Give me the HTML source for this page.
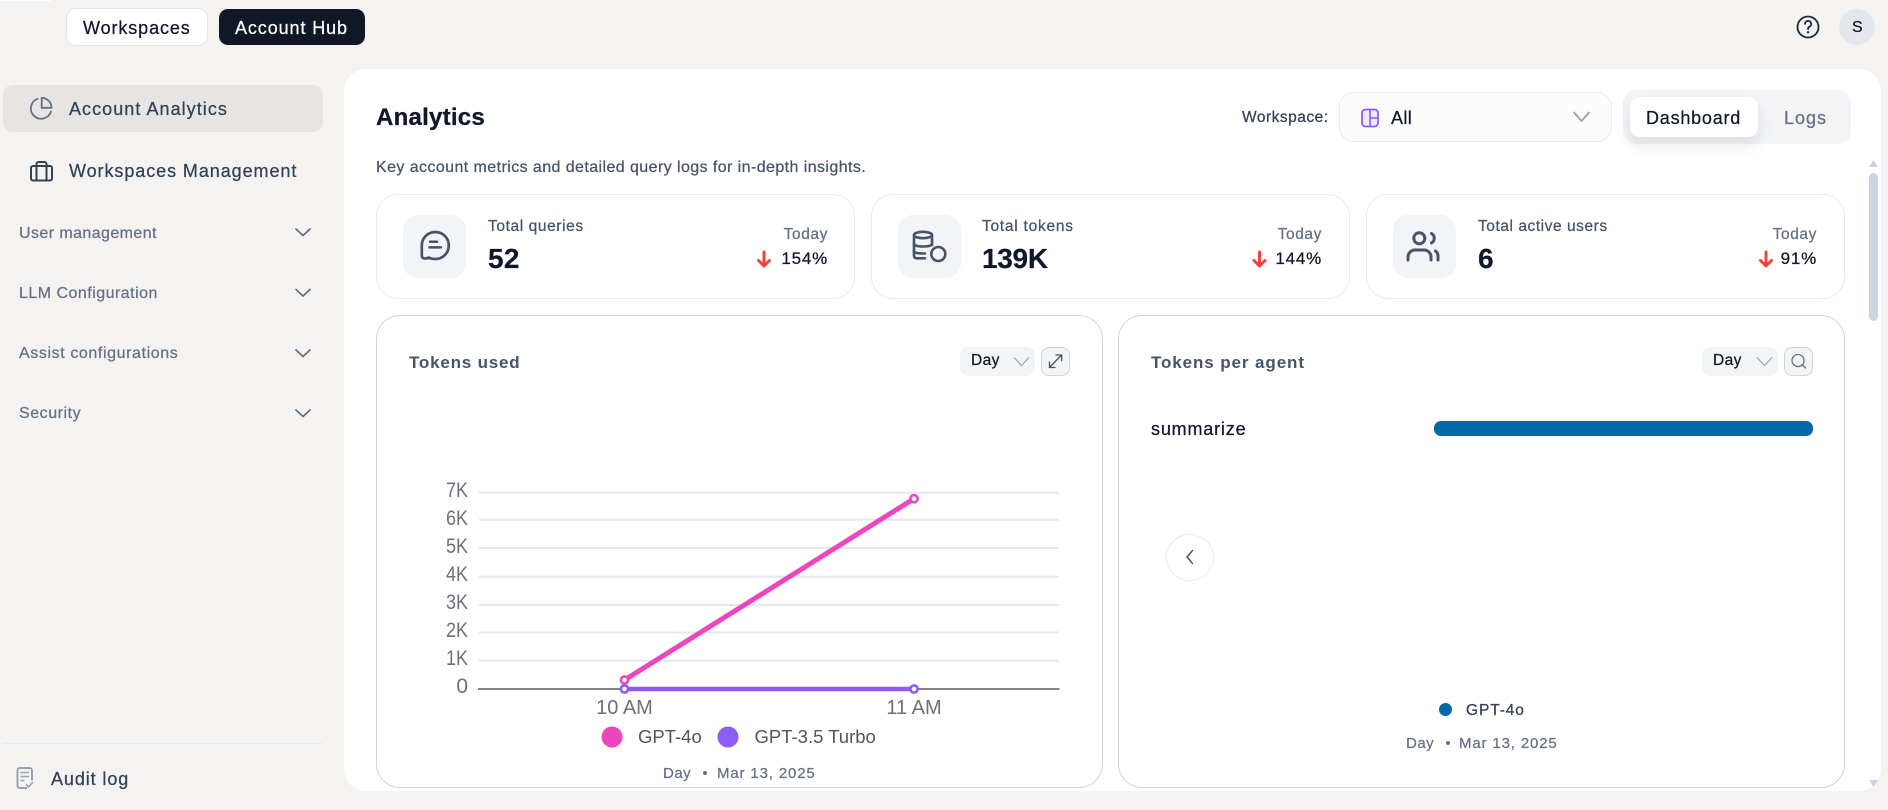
<!DOCTYPE html>
<html lang="en">
<head>
<meta charset="utf-8">
<title>Analytics</title>
<style>
html,body{margin:0;padding:0;width:1888px;height:810px;overflow:hidden;background:#f4f3f1;font-family:"Liberation Sans",sans-serif;}
.b{position:absolute;box-sizing:border-box;}
.t{position:absolute;white-space:nowrap;line-height:20px;height:20px;-webkit-text-stroke:.25px currentColor;}
.r{text-align:right;}
.stat{position:absolute;box-sizing:border-box;top:194px;height:105px;background:#fff;border:1px solid #eaecf0;border-radius:22px;}
.ibox{position:absolute;top:215px;height:63px;width:63px;background:#f2f4f7;border-radius:15px;}
.lbl{font-size:15.5px;color:#475467;letter-spacing:.75px;top:217px;}
.num{font-size:28px;font-weight:bold;color:#101828;top:249px;-webkit-text-stroke:.2px currentColor;}
.today{font-size:15.5px;color:#667085;letter-spacing:.6px;top:225px;}
.pct{font-size:17px;color:#101828;letter-spacing:.8px;top:249px;}
.sec{font-size:16px;color:#667085;left:19px;}
.chart{position:absolute;box-sizing:border-box;top:315px;height:473px;background:#fff;border:1px solid #d0d5dd;border-radius:24px;}
.ttl{font-size:17px;font-weight:bold;color:#475467;top:353px;-webkit-text-stroke:0;}
.dd{position:absolute;top:347px;height:29px;background:#f2f4f7;border-radius:8px;}
.ib{position:absolute;box-sizing:border-box;top:347px;height:29px;width:29px;background:#f2f4f7;border:1px solid #d0d5dd;border-radius:8px;}
.day{font-size:15.5px;color:#101828;letter-spacing:.4px;top:351px;}
.foot{font-size:15px;color:#667085;}
svg{position:absolute;left:0;top:0;overflow:visible;}
</style>
</head>
<body>
<div class="b" style="left:0;top:0;width:51px;height:1px;background:#fff"></div>

<!-- top nav -->
<div class="b" style="left:66px;top:8px;width:142px;height:38px;background:#fff;border:1px solid #e7e5e4;border-radius:10px"></div>
<div class="t" style="left:83px;top:18px;font-size:18px;letter-spacing:.9px;color:#101828">Workspaces</div>
<div class="b" style="left:219px;top:9px;width:146px;height:36px;background:#101828;border-radius:9px"></div>
<div class="t" style="left:235px;top:18px;font-size:18px;letter-spacing:.9px;color:#fff">Account Hub</div>
<div class="b" style="left:1839px;top:9px;width:36px;height:36px;background:#e4e7ec;border-radius:50%"></div>
<div class="t" style="left:1852px;top:18px;font-size:16px;color:#101828">S</div>

<!-- sidebar -->
<div class="b" style="left:3px;top:85px;width:320px;height:47px;background:#e7e5e4;border-radius:10px"></div>
<div class="t" style="left:69px;top:99px;font-size:18px;letter-spacing:1.05px;color:#344054">Account Analytics</div>
<div class="t" style="left:69px;top:161px;font-size:18px;letter-spacing:.93px;color:#344054">Workspaces Management</div>
<div class="t sec" style="top:224px;letter-spacing:.42px">User management</div>
<div class="t sec" style="top:284px;letter-spacing:.48px">LLM Configuration</div>
<div class="t sec" style="top:344px;letter-spacing:.6px">Assist configurations</div>
<div class="t sec" style="top:404px;letter-spacing:.55px">Security</div>
<div class="b" style="left:3px;top:743px;width:320px;height:1px;background:#eaeaea"></div>
<div class="t" style="left:51px;top:769px;font-size:18px;letter-spacing:.9px;color:#344054">Audit log</div>

<!-- main -->
<div class="b" style="left:344px;top:69px;width:1537px;height:722px;background:#fff;border-radius:22px"></div>
<div class="t" style="left:376px;top:108px;font-size:24px;font-weight:bold;letter-spacing:.25px;color:#101828;-webkit-text-stroke:.3px currentColor">Analytics</div>
<div class="t" style="left:376px;top:158px;font-size:16px;letter-spacing:.42px;color:#475467">Key account metrics and detailed query logs for in-depth insights.</div>

<div class="t" style="left:1242px;top:108px;font-size:15.5px;letter-spacing:.5px;color:#344054">Workspace:</div>
<div class="b" style="left:1339px;top:92px;width:273px;height:50px;background:#fcfcfd;border:1px solid #eaecf0;border-radius:15px"></div>
<div class="t" style="left:1391px;top:108px;font-size:18px;letter-spacing:.4px;color:#101828">All</div>
<div class="b" style="left:1623px;top:90px;width:228px;height:54px;background:#f2f4f7;border-radius:13px"></div>
<div class="b" style="left:1770px;top:97px;width:72px;height:40px;background:#f4f4f5;border-radius:10px"></div>
<div class="b" style="left:1630px;top:97px;width:128px;height:40px;background:#fff;border-radius:10px;box-shadow:0 8px 16px rgba(16,24,40,.10)"></div>
<div class="t" style="left:1646px;top:108px;font-size:18px;letter-spacing:.78px;color:#101828">Dashboard</div>
<div class="t" style="left:1784px;top:108px;font-size:18px;letter-spacing:1px;color:#667085">Logs</div>

<!-- stat cards -->
<div class="stat" style="left:376px;width:479px"></div>
<div class="ibox" style="left:403px"></div>
<div class="t lbl" style="left:488px;letter-spacing:.6px">Total queries</div>
<div class="t num" style="left:488px;letter-spacing:.3px">52</div>
<div class="t today r" style="right:1060px">Today</div>
<div class="t pct r" style="right:1060px">154%</div>

<div class="stat" style="left:871px;width:479px"></div>
<div class="ibox" style="left:898px"></div>
<div class="t lbl" style="left:982px">Total tokens</div>
<div class="t num" style="left:982px;letter-spacing:-.3px">139K</div>
<div class="t today r" style="right:566px">Today</div>
<div class="t pct r" style="right:566px">144%</div>

<div class="stat" style="left:1366px;width:479px"></div>
<div class="ibox" style="left:1393px"></div>
<div class="t lbl" style="left:1478px;letter-spacing:.55px">Total active users</div>
<div class="t num" style="left:1478px">6</div>
<div class="t today r" style="right:71px">Today</div>
<div class="t pct r" style="right:71px">91%</div>

<!-- chart cards -->
<div class="chart" style="left:376px;width:727px"></div>
<div class="chart" style="left:1118px;width:727px"></div>

<div class="t ttl" style="left:409px;letter-spacing:.8px">Tokens used</div>
<div class="dd" style="left:960px;width:75px"></div>
<div class="ib" style="left:1041px"></div>
<div class="t day" style="left:971px">Day</div>

<div class="t ttl" style="left:1151px;letter-spacing:.9px">Tokens per agent</div>
<div class="dd" style="left:1702px;width:76px"></div>
<div class="ib" style="left:1784px"></div>
<div class="t day" style="left:1713px">Day</div>

<div class="t" style="left:1151px;top:419px;font-size:18px;letter-spacing:.82px;color:#101828">summarize</div>
<div class="b" style="left:1434px;top:421px;width:379px;height:15px;background:#0069a5;border-radius:7px"></div>
<div class="b" style="left:1166px;top:534px;width:48px;height:47px;background:#fff;border:1px solid #eaecf0;border-radius:50%"></div>
<div class="b" style="left:1439px;top:703px;width:13px;height:13px;background:#0069a5;border-radius:50%"></div>
<div class="t" style="left:1466px;top:701px;font-size:15.5px;letter-spacing:.9px;color:#344054">GPT-4o</div>

<div class="t foot" style="left:663px;top:764px;letter-spacing:.5px">Day</div>
<div class="b" style="left:702.500px;top:771px;width:4px;height:4px;background:#667085;border-radius:50%"></div>
<div class="t foot" style="left:717px;top:764px;letter-spacing:.85px">Mar 13, 2025</div>
<div class="t foot" style="left:1406px;top:734px;letter-spacing:.5px">Day</div>
<div class="b" style="left:1445.500px;top:741px;width:4px;height:4px;background:#667085;border-radius:50%"></div>
<div class="t foot" style="left:1459px;top:734px;letter-spacing:.85px">Mar 13, 2025</div>

<!-- scrollbar -->
<div class="b" style="left:1869px;top:173px;width:9px;height:148px;background:#cbd5e1;border-radius:5px"></div>

<svg width="1888" height="810" viewBox="0 0 1888 810" fill="none">
  <!-- scrollbar arrows -->
  <path d="M1873.500 160l4.500 7h-9z" fill="#cbd5e1"/>
  <path d="M1873.500 787l-4.500-7h9z" fill="#cbd5e1"/>

  <!-- sidebar icons -->
  <path d="M37.500 98.800A10.300 10.300 0 1 0 51 111.500" stroke="#667085" stroke-width="1.800" stroke-linecap="round"/>
  <path d="M41.700 97.800A10 10 0 0 1 51.500 107.800H41.700Z" stroke="#667085" stroke-width="1.800" stroke-linejoin="round"/>
  <rect x="31" y="166" width="21" height="14.500" rx="2" stroke="#344054" stroke-width="2"/>
  <path d="M36.500 180.500V164a2 2 0 0 1 2-2h6a2 2 0 0 1 2 2v16.500" stroke="#344054" stroke-width="2"/>
  <g stroke="#667085" stroke-width="1.800" stroke-linecap="round" stroke-linejoin="round">
    <path d="M296 229l7 6.500 7-6.500"/><path d="M296 289.500l7 6.500 7-6.500"/><path d="M296 350l7 6.500 7-6.500"/><path d="M296 410l7 6.500 7-6.500"/>
  </g>
  <path d="M27 788h-7a2.500 2.500 0 0 1-2.500-2.500v-15a2.500 2.500 0 0 1 2.500-2.500h9.500a2.500 2.500 0 0 1 2.500 2.500v10" stroke="#9ca3af" stroke-width="2"/>
  <path d="M20.500 772.500h8.500M20.500 776.500h8.500M20.500 780.500h4" stroke="#9ca3af" stroke-width="1.600"/>
  <path d="M26 784.500l2.500 2.500 4.500-5" stroke="#9ca3af" stroke-width="1.600"/>

  <!-- help -->
  <circle cx="1808" cy="27" r="10.500" stroke="#1d2939" stroke-width="1.800"/>
  <path d="M1805 24a3.100 3.100 0 1 1 4.600 2.700c-1 .6-1.600 1.200-1.600 2.400" stroke="#1d2939" stroke-width="1.800" stroke-linecap="round"/>
  <circle cx="1808" cy="32.300" r="1.200" fill="#1d2939"/>

  <!-- workspace select icons -->
  <rect x="1362" y="109.500" width="16" height="17" rx="3.500" fill="#ede9fe" stroke="#8b5cf6" stroke-width="1.800"/>
  <path d="M1370 109.500v17M1370 118h8" stroke="#8b5cf6" stroke-width="1.600"/>
  <path d="M1574 112.500l7.500 8.500 7.500-8.500" stroke="#98a2b3" stroke-width="1.800" stroke-linecap="round" stroke-linejoin="round"/>

  <!-- chat icon -->
  <path d="M435.300 259A13.500 13.500 0 1 0 421.800 245.500V255Q421.700 259 425.700 258.500L428.700 257.600Q431.700 259 435.300 259Z" stroke="#475467" stroke-width="2.700" stroke-linejoin="round"/>
  <path d="M430 241.700h7M429.500 247.400h11.500" stroke="#475467" stroke-width="2.500" stroke-linecap="round"/>

  <!-- db icon -->
  <g stroke="#475467" stroke-width="2.600" stroke-linecap="round">
    <ellipse cx="923" cy="235" rx="9" ry="3.200"/>
    <path d="M914 235v20.500q0 2.800 3 2.800h8"/>
    <path d="M932 235v10"/>
    <path d="M914 243.500q0 3 9 3t9-3"/>
    <path d="M914 251q0 2.500 9 2.500h2"/>
    <circle cx="938.300" cy="254" r="7"/>
  </g>

  <!-- users icon -->
  <g stroke="#475467" stroke-width="3" stroke-linecap="round">
    <circle cx="1419.300" cy="238.300" r="5.500"/>
    <path d="M1431.500 233.500a5.500 5.500 0 0 1 0 9.500"/>
    <path d="M1408 260v-3a7 7 0 0 1 7-7h9a7 7 0 0 1 7 7v3"/>
    <path d="M1435.500 251a6 6 0 0 1 2.500 5v4"/>
  </g>

  <!-- red arrows -->
  <g stroke="#f04438" stroke-width="3" stroke-linecap="round" stroke-linejoin="round">
    <path d="M764 252v14M758.500 260.500l5.500 5.500 5.500-5.500"/>
    <path d="M1259.500 252v14M1254 260.500l5.500 5.500 5.500-5.500"/>
    <path d="M1766 252v14M1760.500 260.500l5.500 5.500 5.500-5.500"/>
  </g>

  <!-- dropdown chevrons and tool icons -->
  <path d="M1014 357.500l7.500 8 7.500-8" stroke="#98a2b3" stroke-width="1.200"/>
  <path d="M1757 357.500l7.500 8 7.500-8" stroke="#98a2b3" stroke-width="1.200"/>
  <path d="M1049.500 367.500l12-12.500M1055.500 355h6.200v6.200M1049.500 361.500v6h6" stroke="#475467" stroke-width="1.300"/>
  <circle cx="1798" cy="360.500" r="6" stroke="#667085" stroke-width="1.300"/>
  <path d="M1802.500 365l3 3" stroke="#667085" stroke-width="1.300" stroke-linecap="round"/>
  <path d="M1192.500 550.500l-5.500 6.500 5.500 6.500" stroke="#475467" stroke-width="1.500" stroke-linecap="round" stroke-linejoin="round"/>

  <!-- chart -->
  <g stroke="#e4e8f1" stroke-width="2">
    <path d="M479 492.700H1059M479 519.700H1059M479 548H1059M479 576.700H1059M479 605H1059M479 632.500H1059M479 660.700H1059"/>
  </g>
  <path d="M478 689H1059.500" stroke="#6e7079" stroke-width="1.800"/>
  <g font-family="'Liberation Sans',sans-serif" font-size="21" fill="#6e7079" text-anchor="end">
    <text x="468" y="497" textLength="22" lengthAdjust="spacingAndGlyphs">7K</text><text x="468" y="525" textLength="22" lengthAdjust="spacingAndGlyphs">6K</text><text x="468" y="553" textLength="22" lengthAdjust="spacingAndGlyphs">5K</text><text x="468" y="581" textLength="22" lengthAdjust="spacingAndGlyphs">4K</text><text x="468" y="609" textLength="22" lengthAdjust="spacingAndGlyphs">3K</text><text x="468" y="637" textLength="22" lengthAdjust="spacingAndGlyphs">2K</text><text x="468" y="665" textLength="22" lengthAdjust="spacingAndGlyphs">1K</text><text x="468" y="693">0</text>
  </g>
  <g font-family="'Liberation Sans',sans-serif" font-size="20" fill="#6e7079" text-anchor="middle">
    <text x="624.500" y="714">10 AM</text><text x="914" y="714">11 AM</text>
  </g>
  <path d="M624.500 680L914 498.700" stroke="#ee46bc" stroke-width="5"/>
  <path d="M624.500 689H914" stroke="#8b5cf6" stroke-width="4.500"/>
  <g fill="#fff" stroke-width="2.600">
    <circle cx="624.500" cy="680" r="3.600" stroke="#ee46bc"/><circle cx="914" cy="498.700" r="3.600" stroke="#ee46bc"/>
    <circle cx="624.500" cy="689" r="3.600" stroke="#8b5cf6"/><circle cx="914" cy="689" r="3.600" stroke="#8b5cf6"/>
  </g>
  <circle cx="612" cy="737" r="10.500" fill="#ee46bc"/>
  <circle cx="728" cy="737" r="10.500" fill="#8b5cf6"/>
  <g font-family="'Liberation Sans',sans-serif" font-size="18.500" fill="#555">
    <text x="638" y="743">GPT-4o</text><text x="754.500" y="743">GPT-3.5 Turbo</text>
  </g>
</svg>
</body>
</html>
